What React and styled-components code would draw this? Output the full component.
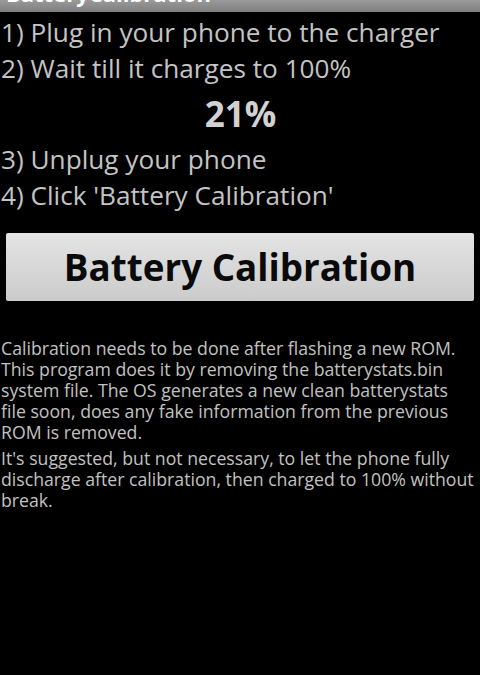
import React from 'react';
import styled, { createGlobalStyle } from 'styled-components';

const GlobalStyle = createGlobalStyle`
    body {
        margin: 0;
        background: #000;
    }
`;

const Screen = styled.div`
    width: 480px;
    height: 675px;
    overflow: hidden;
    background: #000;
    font-family: "Open Sans", "Noto Sans", "DejaVu Sans", sans-serif;
    color: #c4c4c4;
`;

const TitleBar = styled.div`
    height: 12px;
    overflow: hidden;
    background: linear-gradient(#9a9a9a, #7e7e7e);
    padding-left: 6px;
`;

const TitleText = styled.div`
    margin-top: -18px;
    font-size: 22px;
    line-height: 22px;
    font-weight: 700;
    color: #fff;
`;

const Steps = styled.div`
    padding: 2px 0 0 1px;
`;

const Step = styled.div`
    font-size: 26.2px;
    line-height: 36px;
    white-space: nowrap;
`;

const Percent = styled.div`
    font-size: 35px;
    line-height: 48px;
    font-weight: 700;
    text-align: center;
    color: #d2d2d2;
    margin: 4px 0 3px;
`;

const CalibrateButton = styled.button`
    display: flex;
    align-items: center;
    justify-content: center;
    box-sizing: border-box;
    width: 468px;
    height: 68px;
    margin: 20px 6px 0;
    padding: 0;
    border: none;
    border-radius: 2px;
    background: linear-gradient(#e4e4e4, #cbcbcb);
    font-family: inherit;
    font-size: 36.8px;
    font-weight: 700;
    color: #0a0a0a;
`;

const Info = styled.div`
    margin-top: 37px;
    padding: 0 4px 0 1px;
`;

const Paragraph = styled.p`
    margin: 0 0 5px;
    font-size: 17.7px;
    line-height: 21px;
    color: #c2c2c2;
`;

const App = () => {
    return (
        <>
            <GlobalStyle />
            <Screen>
                <TitleBar>
                    <TitleText>BatteryCalibration</TitleText>
                </TitleBar>
                <Steps>
                    <Step>1) Plug in your phone to the charger</Step>
                    <Step>2) Wait till it charges to 100%</Step>
                    <Percent>21%</Percent>
                    <Step>3) Unplug your phone</Step>
                    <Step>4) Click 'Battery Calibration'</Step>
                </Steps>
                <CalibrateButton>Battery Calibration</CalibrateButton>
                <Info>
                    <Paragraph>
                        Calibration needs to be done after flashing a new ROM. This program does it by removing the batterystats.bin system file. The OS generates a new clean batterystats file soon, does any fake information from the previous ROM is removed.
                    </Paragraph>
                    <Paragraph>
                        It's suggested, but not necessary, to let the phone fully discharge after calibration, then charged to 100% without break.
                    </Paragraph>
                </Info>
            </Screen>
        </>
    );
};

export default App;
